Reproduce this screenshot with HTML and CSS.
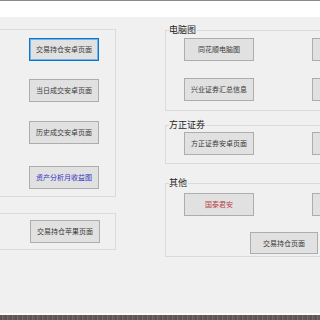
FILE: index.html
```html
<!DOCTYPE html>
<html lang="zh-CN">
<head>
    <meta charset="UTF-8">
    <meta name="viewport" content="width=device-width, initial-scale=1.0">
    <title>交易页面</title>
    <link rel="stylesheet" href="styles.css">
</head>
<body>
    <div class="window">
        <div class="titlebar"></div>
        <div class="client">
            <div class="left">
                <div class="box box-main">
                    <button class="btn focus">交易持仓安卓页面</button>
                    <button class="btn">当日成交安卓页面</button>
                    <button class="btn shift">历史成交安卓页面</button>
                    <button class="btn shift blue">资产分析月收益图</button>
                </div>
                <div class="box box-ios">
                    <button class="btn">交易持仓苹果页面</button>
                </div>
            </div>
            <div class="right">
                <fieldset class="group group-pc">
                    <legend>电脑图</legend>
                    <div class="grid">
                        <button class="btn">同花顺电脑图</button>
                        <button class="btn"></button>
                        <button class="btn">兴业证券汇总信息</button>
                        <button class="btn"></button>
                    </div>
                </fieldset>
                <fieldset class="group group-fz">
                    <legend>方正证券</legend>
                    <div class="grid">
                        <button class="btn">方正证券安卓页面</button>
                        <button class="btn"></button>
                    </div>
                </fieldset>
                <fieldset class="group group-other">
                    <legend>其他</legend>
                    <div class="grid">
                        <button class="btn red">国泰君安</button>
                        <button class="btn"></button>
                    </div>
                    <button class="btn wide">交易持仓页面</button>
                </fieldset>
            </div>
        </div>
        <div class="taskbar"></div>
    </div>
</body>
</html>
```

FILE: styles.css
```css
body {
    margin: 0;
    width: 320px;
    height: 320px;
    overflow: hidden;
    font-family: "Noto Sans CJK SC", "Noto Sans", sans-serif;
}
.window {
    display: flex;
    flex-direction: column;
    height: 320px;
}
.titlebar {
    height: 16px;
    background: #ffffff;
    border-top: 1px solid #8a8a8a;
}
.client {
    flex: 1;
    display: flex;
    background: #f0f0f0;
    overflow: hidden;
}
.taskbar {
    height: 5px;
    border-top: 2px solid #fafafa;
    background: repeating-linear-gradient(90deg, #5e5252 0 2px, #786a6a 2px 3px, #66595a 3px 5px);
}

/* left column */
.left {
    flex: none;
    width: 116px;
    margin-top: 12px;
}
.box {
    display: flex;
    flex-direction: column;
    align-items: flex-start;
    border: 1px solid #dadada;
    border-left: none;
}
.box-main {
    gap: 18px;
    padding: 8px 0 7px 29px;
}
.box-main .btn:nth-child(3) { margin-top: 1px; }
.box-main .btn:nth-child(4) { margin-top: 4px; }
.box-ios {
    margin-top: 16px;
    padding: 6px 0 6px 30px;
}

/* buttons */
.btn {
    box-sizing: border-box;
    width: 70px;
    height: 23px;
    padding: 0;
    font-family: inherit;
    font-size: 7px;
    line-height: 21px;
    color: #3a3a3a;
    background: #e1e1e1;
    border: 1px solid #adadad;
    border-radius: 0;
    white-space: nowrap;
    overflow: hidden;
}
.focus {
    border-color: #0078d7;
    box-shadow: inset 0 0 0 1px rgba(0, 120, 215, 0.45);
}
.blue { color: #3434c4; }
.red { color: #b84444; }

/* right column */
.right {
    flex: none;
    width: 240px;
    margin: 8px 0 0 49px;
}
.group {
    margin: 0;
    min-width: 0;
    border: 1px solid #dadada;
    border-right: none;
    padding: 3px 0 9px 3px;
}
.group legend {
    padding: 0 1px 0 0;
    font-size: 9px;
    line-height: 10px;
    color: #1e1e1e;
}
.grid {
    display: grid;
    grid-template-columns: 70px 70px;
    column-gap: 58px;
    row-gap: 17px;
    margin-left: 15px;
}
.group-fz {
    margin-top: 9px;
    padding: 2px 0 8px 3px;
}
.group-other {
    margin-top: 14px;
    padding: 5px 0 2px 3px;
}
.wide {
    display: block;
    width: 68px;
    height: 22px;
    line-height: 20px;
    margin: 16px 0 0 81px;
}
```
